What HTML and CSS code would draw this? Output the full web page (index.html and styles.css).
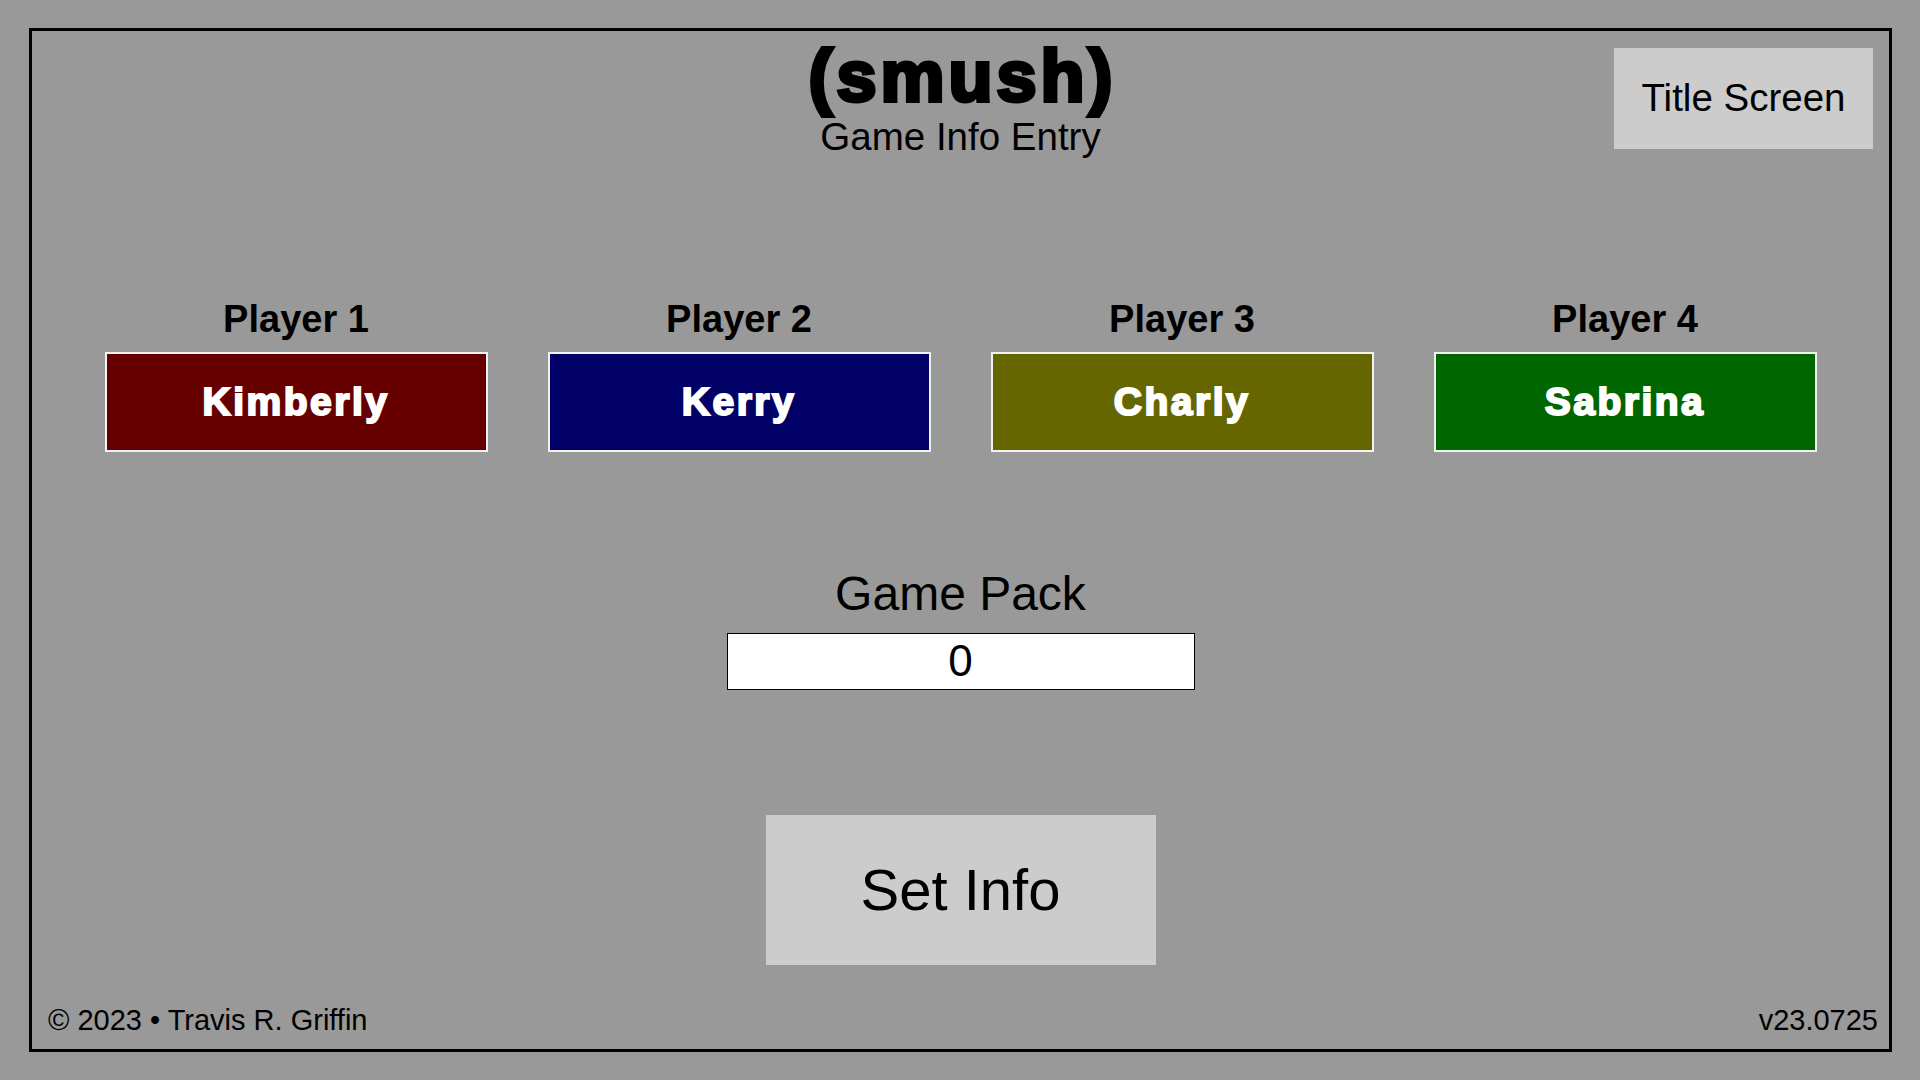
FILE: index.html
```html
<!DOCTYPE html>
<html lang="en">
<head>
    <meta charset="UTF-8">
    <meta name="viewport" content="width=device-width, initial-scale=1.0">
    <title>(smush) Game Info Entry</title>
    <link rel="stylesheet" href="styles.css">
</head>
<body>
    <div class="frame">
        <div class="header">
            <div></div>
            <div class="heading">
                <div class="logo"><span>(smush)</span></div>
                <div class="subtitle">Game Info Entry</div>
            </div>
            <button class="title-btn">Title Screen</button>
        </div>

        <div class="players">
            <div class="player">
                <div class="player-label">Player 1</div>
                <div class="player-name p1">Kimberly</div>
            </div>
            <div class="player">
                <div class="player-label">Player 2</div>
                <div class="player-name p2">Kerry</div>
            </div>
            <div class="player">
                <div class="player-label">Player 3</div>
                <div class="player-name p3">Charly</div>
            </div>
            <div class="player">
                <div class="player-label">Player 4</div>
                <div class="player-name p4">Sabrina</div>
            </div>
        </div>

        <div class="pack">
            <div class="pack-label">Game Pack</div>
            <input class="pack-input" type="text" value="0">
        </div>

        <div class="submit">
            <button class="set-btn">Set Info</button>
        </div>

        <div class="footer">
            <span>© 2023 • Travis R. Griffin</span>
            <span>v23.0725</span>
        </div>
    </div>
</body>
</html>
```

FILE: styles.css
```css
body {
    margin: 0;
    overflow: hidden;
    background: #999999;
    font-family: "Liberation Sans", Arial, sans-serif;
    color: #000;
}
.frame {
    box-sizing: border-box;
    height: calc(100vh - 56px);
    margin: 28px 28px 0 29px;
    border: 3px solid #000;
    padding-top: 9px;
    display: flex;
    flex-direction: column;
}

/* top bar */
.header {
    display: grid;
    grid-template-columns: 1fr auto 1fr;
    align-items: start;
    padding: 0 16px;
}
.heading {
    text-align: center;
}
.logo {
    font-size: 72px;
    font-weight: bold;
    line-height: 1;
    letter-spacing: 4px;
    -webkit-text-stroke: 4px #000;
}
.logo span {
    margin-right: -4px;
}
.subtitle {
    margin-top: 6px;
    font-size: 38.5px;
    line-height: 1;
}
.title-btn {
    justify-self: end;
    margin-top: 8px;
    width: 259px;
    height: 101px;
    border: none;
    background: #cccccc;
    font-family: inherit;
    font-size: 38.5px;
    line-height: 1;
    color: #000;
    padding: 0;
}

/* players */
.players {
    display: flex;
    justify-content: center;
    gap: 60px;
    margin-top: 143px;
}
.player {
    width: 383px;
    text-align: center;
}
.player-label {
    font-size: 38px;
    font-weight: bold;
    line-height: 1;
    margin-bottom: 14px;
}
.player-name {
    box-sizing: border-box;
    height: 100px;
    border: 2px solid #f2f2f2;
    display: flex;
    align-items: center;
    justify-content: center;
    color: #fff;
    font-size: 39px;
    font-weight: bold;
    line-height: 1;
    letter-spacing: 2.5px;
    -webkit-text-stroke: 2px #fff;
}
.p1 { background: #660000; }
.p2 { background: #000066; }
.p3 { background: #666600; }
.p4 { background: #006600; }

/* game pack */
.pack {
    margin-top: 118px;
    display: flex;
    flex-direction: column;
    align-items: center;
}
.pack-label {
    font-size: 48px;
    line-height: 1;
    margin-bottom: 15px;
}
.pack-input {
    box-sizing: border-box;
    width: 468px;
    height: 57px;
    border: 1px solid #000;
    background: #fff;
    font-family: inherit;
    font-size: 44px;
    text-align: center;
    padding: 0;
    color: #000;
    outline: none;
}

.submit {
    margin-top: 125px;
    display: flex;
    justify-content: center;
}
.set-btn {
    width: 390px;
    height: 150px;
    border: none;
    background: #cccccc;
    font-family: inherit;
    font-size: 58px;
    line-height: 1;
    color: #000;
    padding: 0;
}

.footer {
    margin-top: auto;
    display: flex;
    justify-content: space-between;
    padding: 0 11px 14px 16px;
    font-size: 29px;
    line-height: 1;
}
```
